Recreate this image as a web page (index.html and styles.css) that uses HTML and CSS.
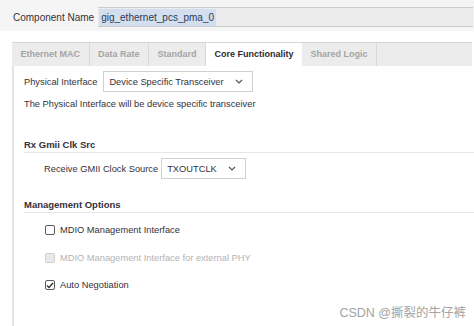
FILE: index.html
```html
<!DOCTYPE html>
<html lang="en">

<head>
    <meta charset="UTF-8">
    <meta name="viewport" content="width=device-width, initial-scale=1.0">
    <title>gig_ethernet_pcs_pma_0</title>
    <link rel="stylesheet" href="styles.css">
</head>

<body>
    <div id="customize">
        <header class="header">
            <span class="header-label">Component Name</span>
            <div class="name-field"><span class="name-value">gig_ethernet_pcs_pma_0</span></div>
        </header>

        <nav class="tabs">
            <div class="tab">Ethernet MAC</div>
            <div class="tab">Data Rate</div>
            <div class="tab">Standard</div>
            <div class="tab active">Core Functionality</div>
            <div class="tab">Shared Logic</div>
        </nav>

        <div class="panel">
            <div class="row first-row">
                <span class="label">Physical Interface</span>
                <div class="select select-wide">
                    <span>Device Specific Transceiver</span>
                    <svg class="chevron" width="8" height="5" viewBox="0 0 8 5"><polyline points="1,1 4,4 7,1" /></svg>
                </div>
            </div>
            <p class="note">The Physical Interface will be device specific transceiver</p>

            <div class="section clk-section">
                <h4 class="section-title">Rx Gmii Clk Src</h4>
                <div class="row indent">
                    <span class="label">Receive GMII Clock Source</span>
                    <div class="select select-narrow">
                        <span>TXOUTCLK</span>
                        <svg class="chevron" width="8" height="5" viewBox="0 0 8 5"><polyline points="1,1 4,4 7,1" /></svg>
                    </div>
                </div>
            </div>

            <div class="section mgmt-section">
                <h4 class="section-title">Management Options</h4>
                <ul class="options">
                    <li class="option">
                        <span class="box"></span>
                        <span>MDIO Management Interface</span>
                    </li>
                    <li class="option disabled">
                        <span class="box"></span>
                        <span>MDIO Management Interface for external PHY</span>
                    </li>
                    <li class="option">
                        <span class="box checked">
                            <svg width="8" height="7" viewBox="0 0 8 7"><polyline points="1,3.5 3,5.5 7,1" /></svg>
                        </span>
                        <span>Auto Negotiation</span>
                    </li>
                </ul>
            </div>
        </div>

        <div class="watermark">CSDN @撕裂的牛仔裤</div>
    </div>
</body>

</html>
```

FILE: styles.css
```css
* {
    margin: 0;
    padding: 0;
    box-sizing: border-box;
}

body {
    background-color: #ffffff;
    font-family: 'Liberation Sans', Arial, 'Noto Sans CJK SC', sans-serif;
    font-size: 9.3px;
    color: #35303a;
}

#customize {
    position: relative;
    width: 474px;
    height: 326px;
    overflow: hidden;
}

.header {
    display: flex;
    align-items: center;
    height: 31px;
    padding: 7px 1px 4px 13px;
    background-color: #f5f5f5;
}

.header-label {
    font-size: 10px;
    margin-right: 4px;
}

.name-field {
    flex: 1;
    height: 20px;
    display: flex;
    align-items: center;
    padding-left: 1px;
    background-color: #ececec;
    border-top: solid 1px #cbcbcb;
    border-bottom: solid 1px #cbcbcb;
}

.name-value {
    height: 17px;
    line-height: 17px;
    padding: 0 2px;
    font-size: 10px;
    color: #2d3a5a;
    background-color: #d3deee;
}

.tabs {
    display: flex;
    height: 24px;
    margin: 11px 2px 0 12px;
    background-color: #ececec;
    border-top: solid 1px #d6d6d6;
}

.tab {
    padding: 0 8.5px;
    line-height: 23px;
    font-weight: bold;
    font-size: 9px;
    color: #a5a5a5;
    border-right: solid 1px #d9d9d9;
}

.tab.active {
    color: #2e2a30;
    background-color: #ffffff;
    border-right: none;
}

.panel {
    margin-left: 12px;
    height: 261px;
    padding: 5px 0 0 10px;
    border-left: solid 2px #e3e3e3;
}

.row {
    display: flex;
    align-items: center;
    gap: 6px;
}

.indent {
    gap: 3px;
    padding-left: 20px;
    margin-top: 5px;
}

.select {
    display: flex;
    align-items: center;
    justify-content: space-between;
    height: 21px;
    padding: 0 9px 0 5px;
    background-color: #ffffff;
    border: solid 1px #d0d0d0;
}

.select-wide {
    width: 150px;
}

.select-narrow {
    width: 85px;
}

.chevron {
    fill: none;
    stroke: #555555;
    stroke-width: 1.2;
}

.note {
    margin-top: 6px;
    line-height: 12px;
}

.section-title {
    font-size: 9.5px;
    font-weight: bold;
    line-height: 14px;
    border-bottom: solid 1px #e6e6e6;
}

.clk-section {
    margin-top: 28px;
}

.mgmt-section {
    margin-top: 19px;
}

.options {
    list-style: none;
    padding-left: 21px;
    margin-top: 10px;
}

.option {
    display: flex;
    align-items: center;
    gap: 5px;
    height: 14px;
    margin-bottom: 13.5px;
}

.option.disabled {
    color: #b3b3b3;
}

.box {
    display: flex;
    align-items: center;
    justify-content: center;
    width: 10px;
    height: 10px;
    border: solid 1px #5a5a5a;
    border-radius: 2px;
    background-color: #ffffff;
}

.disabled .box {
    border-color: #cfcfcf;
    background-color: #e9e9e9;
}

.box svg {
    fill: none;
    stroke: #333333;
    stroke-width: 1.4;
}

.watermark {
    position: absolute;
    right: 8px;
    bottom: 5px;
    font-size: 12.5px;
    color: #a3a3a3;
}
```
